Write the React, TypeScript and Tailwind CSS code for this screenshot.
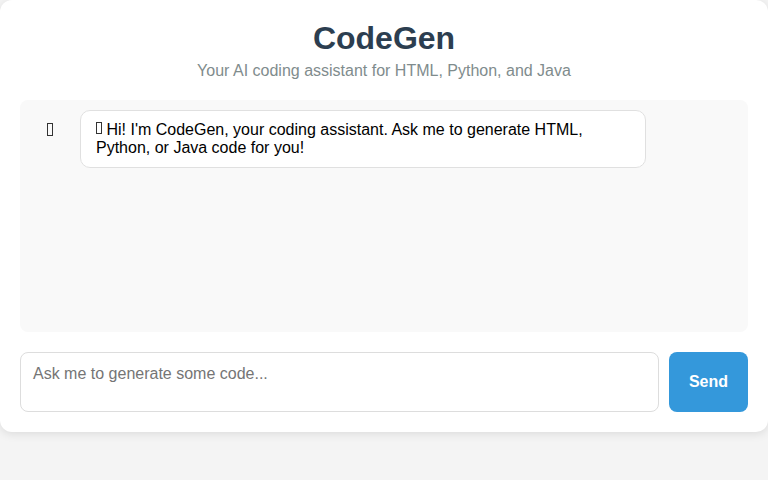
import { useState } from "react"

// missing-glyph box, like the emoji render without an emoji font
const Tofu = () => (
  <span className="inline-block w-[6px] h-[12px] border border-[#333] align-[1px]" />
)

const messages = [
  { from: "bot", text: "Hi! I'm CodeGen, your coding assistant. Ask me to generate HTML, Python, or Java code for you!" },
]

export default function App() {
  const [input, setInput] = useState("")

  return (
    <div className="min-h-[480px] bg-[#f4f4f4] font-['Liberation_Sans',Arial,sans-serif]">
      <div className="bg-white rounded-xl shadow-[0_2px_10px_rgba(0,0,0,0.1)] p-5">
        {/* Header */}
        <div className="text-center mb-5">
          <h1 className="text-[32px] leading-[1.15] font-bold text-[#2c3e50]">CodeGen</h1>
          <p className="text-base leading-[1.15] text-[#7f8c8d] mt-[5px]">Your AI coding assistant for HTML, Python, and Java</p>
        </div>

        {/* Chat */}
        <div className="h-[232px] bg-[#f9f9f9] rounded-lg p-[10px] overflow-y-auto">
          {messages.map((m, i) => (
            <div key={i} className="flex items-start mb-[15px]">
              <div className="w-10 h-10 mr-[10px] flex items-center justify-center shrink-0">
                <span className="block w-[6px] h-[13px] border border-[#333] -mt-[2px]" />
              </div>
              <div className="max-w-[80%] bg-white border border-[#e0e0e0] rounded-[10px] px-[15px] py-[10px] text-base leading-[18px] text-black">
                <Tofu /> {m.text}
              </div>
            </div>
          ))}
        </div>

        {/* Input */}
        <div className="flex gap-[10px] mt-5">
          <textarea
            value={input}
            onChange={(e) => setInput(e.target.value)}
            placeholder="Ask me to generate some code..."
            className="flex-1 h-[60px] resize-none border border-[#ddd] rounded-lg px-3 py-[12px] text-base leading-[1.15] outline-none placeholder:text-[#757575]"
          />
          <button className="w-[79px] h-[60px] bg-[#3498db] text-white font-bold text-base rounded-lg">Send</button>
        </div>
      </div>
    </div>
  )
}
